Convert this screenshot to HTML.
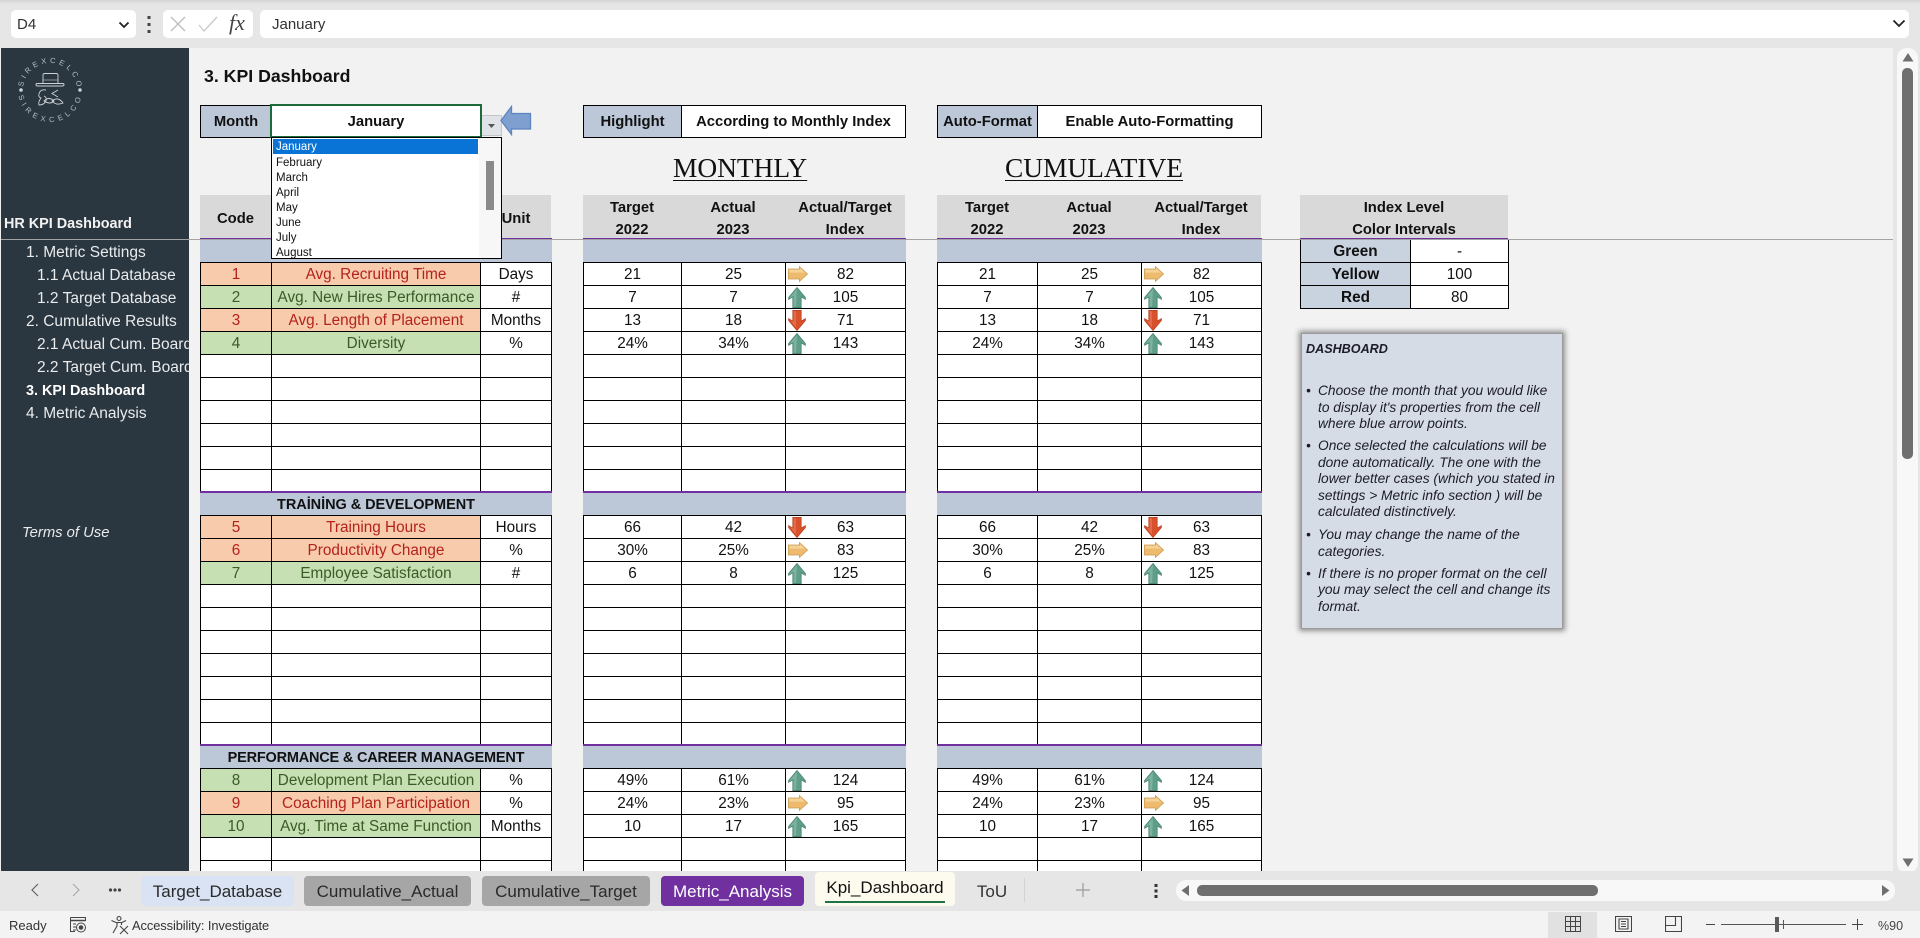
<!DOCTYPE html>
<html lang="en"><head><meta charset="utf-8"><title>KPI Dashboard</title>
<style>
html,body{margin:0;padding:0;width:1920px;height:938px;overflow:hidden;background:#e6e6e6;font-family:"Liberation Sans",sans-serif;color:#111}
*{box-sizing:border-box}
.a{position:absolute}
.n{position:absolute;white-space:nowrap}
#sheet{position:absolute;left:0;top:48px;width:1893px;height:823px;background:#f2f2f2;overflow:hidden}
#in{position:absolute;left:0;top:-48px;width:1893px;height:938px}
#side{position:absolute;left:0;top:48px;width:189px;height:823px;background:#2a3640;border-left:1px solid #eee;overflow:hidden;color:#e9ebec;font-size:15.5px;line-height:20px}
#side div{position:absolute;white-space:nowrap}
table{position:absolute;border-collapse:separate;border-spacing:0;table-layout:fixed;background:#fff;border-top:1px solid #000;border-left:1px solid #000;font-size:15.3px}
td{height:23px;padding:1px 0 0;border-right:1px solid #000;border-bottom:1px solid #000;text-align:center;white-space:nowrap;overflow:hidden;position:relative;line-height:20px}
td.r{background:#f8cbad;color:#b3221c}
td.g{background:#c6e0b4;color:#3a5a26}
td.l{background:#c9d3df;font-weight:bold}
svg.u,svg.d{position:absolute;left:2px;top:1px;width:18px;height:21px}
svg.o{position:absolute;left:2px;top:3px;width:20px;height:16px}
.hd{position:absolute;background:#d9d9d9;top:195px;height:43px}
.cat{position:absolute;background:#bcc7d8;height:23px;font-weight:bold;font-size:14.5px;text-align:center;line-height:25px;letter-spacing:-.05px}
.pl{position:absolute;background:#7030a0}
.b{position:absolute;font-weight:bold;font-size:14.8px;text-align:center;line-height:22px;white-space:nowrap}
.box{position:absolute;top:105px;height:33px;border:1px solid #000;background:#fff;font-weight:bold;font-size:14.8px;text-align:center;line-height:32px;white-space:nowrap;overflow:hidden}
.box.lb{background:#bcc7d8}
.tit{position:absolute;font-family:"Liberation Serif",serif;font-size:27.4px;text-decoration:underline;text-decoration-thickness:1px;text-underline-offset:3px;line-height:32px;white-space:nowrap;top:152px;color:#111}
#dd{position:absolute;left:271px;top:137px;width:231px;height:122px;background:#fff;border:1px solid #000;font-size:11.5px;color:#111}
#dd div{position:absolute;left:4px;height:15px;line-height:17px;white-space:nowrap}
#tb{position:absolute;left:1301px;top:333px;width:262px;height:296px;background:#d6dce6;border:1px solid #9a9a9a;box-shadow:0 0 5px 2px rgba(90,90,90,.65);font-style:italic;font-size:13.75px;color:#1c1c28}
#tb div{position:absolute;left:16px;white-space:nowrap;line-height:17px}
#tb div.x{left:4px}
.wb{position:absolute;background:#fff;border-radius:5px;top:10px;height:28px}
.tab{position:absolute;top:876px;height:30px;border-radius:4px;text-align:center;font-size:17px;line-height:32px;color:#2a2a2a;white-space:nowrap}
</style></head><body>
<svg width="0" height="0" style="position:absolute">
<symbol id="su" viewBox="0 0 16 19"><path fill="#5f9e88" stroke="#4b8571" stroke-width=".7" d="M8 .4 15.600 9.500V11.200L11.800 9V18.600H4.200V9L.4 11.200V9.500Z"/><path fill="#8fc2b0" opacity=".55" d="M8 1.500 1.400 9.500V10L5 8V18H7.200Z"/></symbol>
<symbol id="sd" viewBox="0 0 16 19"><path fill="#d9512c" stroke="#bc4020" stroke-width=".7" d="M8 18.600 15.600 9.500V7.800L11.800 10V.4H4.200V10L.4 7.800V9.500Z"/><path fill="#ee8a68" opacity=".5" d="M5 1V10.500L1.800 9 7 16V1Z"/></symbol>
<symbol id="so" viewBox="0 0 19 15"><path fill="#eebb6e" stroke="#c99a50" stroke-width=".7" d="M18.600 7.500 10.800 .4V2.800H.4V12.200H10.800V14.600Z"/><path fill="#f8dba6" opacity=".7" d="M1 3.300H11.400V1.800L16 6.200H1Z"/></symbol>
</svg>

<!-- top formula bar -->
<div class="a" style="left:0;top:0;width:1920px;height:4px;background:linear-gradient(#d4d4d4,#e6e6e6)"></div>
<div class="wb" style="left:11px;width:125px"></div>
<div class="n" style="left:17px;top:15px;font-size:15px;line-height:20px;color:#333">D4</div>
<svg class="a" style="left:118px;top:21px" width="12" height="8" viewBox="0 0 12 8"><path d="M1.500 1.500 6 6 10.500 1.500" fill="none" stroke="#222" stroke-width="1.800"/></svg>
<svg class="a" style="left:147px;top:16px" width="4" height="18" viewBox="0 0 4 18"><rect x=".5" y="0" width="3" height="3" fill="#444"/><rect x=".5" y="7" width="3" height="3" fill="#444"/><rect x=".5" y="14" width="3" height="3" fill="#444"/></svg>
<div class="wb" style="left:163px;width:90px"></div>
<svg class="a" style="left:170px;top:16px" width="52" height="17" viewBox="0 0 52 17"><path d="M1 1 15 15M15 1 1 15" stroke="#bdbdbd" stroke-width="1.300" fill="none"/><path d="M29 9 34 15 47 1" stroke="#c9c9c9" stroke-width="1.300" fill="none"/></svg>
<div class="n" style="left:229px;top:9px;font:italic 22px/28px 'Liberation Serif',serif;color:#444">fx</div>
<div class="wb" style="left:260px;width:1649px"></div>
<div class="n" style="left:272px;top:15px;font-size:15px;line-height:20px;color:#333">January</div>
<svg class="a" style="left:1892px;top:19px" width="14" height="9" viewBox="0 0 14 9"><path d="M1.500 1.500 7 7 12.500 1.500" fill="none" stroke="#222" stroke-width="1.800"/></svg>

<!-- sheet -->
<div id="sheet"><div id="in">
<div class="n" style="left:204px;top:65px;font-size:17.7px;font-weight:bold;line-height:22px">3. KPI Dashboard</div>

<div class="box lb" style="left:200px;width:72px">Month</div>
<div class="box lb" style="left:583px;width:99px">Highlight</div>
<div class="box" style="left:681px;width:225px">According to Monthly Index</div>
<div class="box lb" style="left:937px;width:101px">Auto-Format</div>
<div class="box" style="left:1037px;width:225px">Enable Auto-Formatting</div>
<div class="tit" style="left:673px">MONTHLY</div>
<div class="tit" style="left:1005px">CUMULATIVE</div>

<div class="hd" style="left:200px;width:351px"></div>
<div class="hd" style="left:583px;width:322px"></div>
<div class="hd" style="left:937px;width:324px"></div>
<div class="hd" style="left:1300px;width:208px"></div>
<div class="b" style="left:200px;top:208px;width:71px">Code</div>
<div class="b" style="left:481px;top:208px;width:70px">Unit</div>
<div class="b" style="left:583px;top:197px;width:98px">Target</div><div class="b" style="left:583px;top:219px;width:98px">2022</div>
<div class="b" style="left:681px;top:197px;width:104px">Actual</div><div class="b" style="left:681px;top:219px;width:104px">2023</div>
<div class="b" style="left:785px;top:197px;width:120px">Actual/Target</div><div class="b" style="left:785px;top:219px;width:120px">Index</div>
<div class="b" style="left:937px;top:197px;width:100px">Target</div><div class="b" style="left:937px;top:219px;width:100px">2022</div>
<div class="b" style="left:1037px;top:197px;width:104px">Actual</div><div class="b" style="left:1037px;top:219px;width:104px">2023</div>
<div class="b" style="left:1141px;top:197px;width:120px">Actual/Target</div><div class="b" style="left:1141px;top:219px;width:120px">Index</div>
<div class="b" style="left:1300px;top:197px;width:208px">Index Level</div><div class="b" style="left:1300px;top:219px;width:208px">Color Intervals</div>

<!-- category rows -->
<div class="cat" style="left:200px;top:239px;width:352px"></div>
<div class="cat" style="left:583px;top:239px;width:323px"></div>
<div class="cat" style="left:937px;top:239px;width:325px"></div>
<div class="cat" style="left:200px;top:493px;width:352px">TRAİNİNG &amp; DEVELOPMENT</div>
<div class="cat" style="left:583px;top:493px;width:323px"></div>
<div class="cat" style="left:937px;top:493px;width:325px"></div>
<div class="cat" style="left:200px;top:746px;width:352px;letter-spacing:-.2px">PERFORMANCE &amp; CAREER MANAGEMENT</div>
<div class="cat" style="left:583px;top:746px;width:323px"></div>
<div class="cat" style="left:937px;top:746px;width:325px"></div>

<!-- group 1 -->
<table style="left:200px;top:262px;width:352px"><colgroup><col style="width:71px"><col style="width:209px"><col style="width:71px"></colgroup>
<tr><td class="r">1</td><td class="r">Avg. Recruiting Time</td><td>Days</td></tr>
<tr><td class="g">2</td><td class="g">Avg. New Hires Performance</td><td>#</td></tr>
<tr><td class="r">3</td><td class="r">Avg. Length of Placement</td><td>Months</td></tr>
<tr><td class="g">4</td><td class="g">Diversity</td><td>%</td></tr>
<tr><td></td><td></td><td></td></tr><tr><td></td><td></td><td></td></tr><tr><td></td><td></td><td></td></tr><tr><td></td><td></td><td></td></tr><tr><td></td><td></td><td></td></tr><tr><td></td><td></td><td></td></tr></table>
<table style="left:583px;top:262px;width:323px"><colgroup><col style="width:98px"><col style="width:104px"><col style="width:120px"></colgroup>
<tr><td>21</td><td>25</td><td><svg class="o"><use href="#so"/></svg>82</td></tr>
<tr><td>7</td><td>7</td><td><svg class="u"><use href="#su"/></svg>105</td></tr>
<tr><td>13</td><td>18</td><td><svg class="d"><use href="#sd"/></svg>71</td></tr>
<tr><td>24%</td><td>34%</td><td><svg class="u"><use href="#su"/></svg>143</td></tr>
<tr><td></td><td></td><td></td></tr><tr><td></td><td></td><td></td></tr><tr><td></td><td></td><td></td></tr><tr><td></td><td></td><td></td></tr><tr><td></td><td></td><td></td></tr><tr><td></td><td></td><td></td></tr></table>
<table style="left:937px;top:262px;width:325px"><colgroup><col style="width:100px"><col style="width:104px"><col style="width:120px"></colgroup>
<tr><td>21</td><td>25</td><td><svg class="o"><use href="#so"/></svg>82</td></tr>
<tr><td>7</td><td>7</td><td><svg class="u"><use href="#su"/></svg>105</td></tr>
<tr><td>13</td><td>18</td><td><svg class="d"><use href="#sd"/></svg>71</td></tr>
<tr><td>24%</td><td>34%</td><td><svg class="u"><use href="#su"/></svg>143</td></tr>
<tr><td></td><td></td><td></td></tr><tr><td></td><td></td><td></td></tr><tr><td></td><td></td><td></td></tr><tr><td></td><td></td><td></td></tr><tr><td></td><td></td><td></td></tr><tr><td></td><td></td><td></td></tr></table>

<!-- group 2 -->
<table style="left:200px;top:515px;width:352px"><colgroup><col style="width:71px"><col style="width:209px"><col style="width:71px"></colgroup>
<tr><td class="r">5</td><td class="r">Training Hours</td><td>Hours</td></tr>
<tr><td class="r">6</td><td class="r">Productivity Change</td><td>%</td></tr>
<tr><td class="g">7</td><td class="g">Employee Satisfaction</td><td>#</td></tr>
<tr><td></td><td></td><td></td></tr><tr><td></td><td></td><td></td></tr><tr><td></td><td></td><td></td></tr><tr><td></td><td></td><td></td></tr><tr><td></td><td></td><td></td></tr><tr><td></td><td></td><td></td></tr><tr><td></td><td></td><td></td></tr></table>
<table style="left:583px;top:515px;width:323px"><colgroup><col style="width:98px"><col style="width:104px"><col style="width:120px"></colgroup>
<tr><td>66</td><td>42</td><td><svg class="d"><use href="#sd"/></svg>63</td></tr>
<tr><td>30%</td><td>25%</td><td><svg class="o"><use href="#so"/></svg>83</td></tr>
<tr><td>6</td><td>8</td><td><svg class="u"><use href="#su"/></svg>125</td></tr>
<tr><td></td><td></td><td></td></tr><tr><td></td><td></td><td></td></tr><tr><td></td><td></td><td></td></tr><tr><td></td><td></td><td></td></tr><tr><td></td><td></td><td></td></tr><tr><td></td><td></td><td></td></tr><tr><td></td><td></td><td></td></tr></table>
<table style="left:937px;top:515px;width:325px"><colgroup><col style="width:100px"><col style="width:104px"><col style="width:120px"></colgroup>
<tr><td>66</td><td>42</td><td><svg class="d"><use href="#sd"/></svg>63</td></tr>
<tr><td>30%</td><td>25%</td><td><svg class="o"><use href="#so"/></svg>83</td></tr>
<tr><td>6</td><td>8</td><td><svg class="u"><use href="#su"/></svg>125</td></tr>
<tr><td></td><td></td><td></td></tr><tr><td></td><td></td><td></td></tr><tr><td></td><td></td><td></td></tr><tr><td></td><td></td><td></td></tr><tr><td></td><td></td><td></td></tr><tr><td></td><td></td><td></td></tr><tr><td></td><td></td><td></td></tr></table>

<!-- group 3 -->
<table style="left:200px;top:768px;width:352px"><colgroup><col style="width:71px"><col style="width:209px"><col style="width:71px"></colgroup>
<tr><td class="g">8</td><td class="g">Development Plan Execution</td><td>%</td></tr>
<tr><td class="r">9</td><td class="r">Coaching Plan Participation</td><td>%</td></tr>
<tr><td class="g">10</td><td class="g">Avg. Time at Same Function</td><td>Months</td></tr>
<tr><td></td><td></td><td></td></tr><tr><td></td><td></td><td></td></tr></table>
<table style="left:583px;top:768px;width:323px"><colgroup><col style="width:98px"><col style="width:104px"><col style="width:120px"></colgroup>
<tr><td>49%</td><td>61%</td><td><svg class="u"><use href="#su"/></svg>124</td></tr>
<tr><td>24%</td><td>23%</td><td><svg class="o"><use href="#so"/></svg>95</td></tr>
<tr><td>10</td><td>17</td><td><svg class="u"><use href="#su"/></svg>165</td></tr>
<tr><td></td><td></td><td></td></tr><tr><td></td><td></td><td></td></tr></table>
<table style="left:937px;top:768px;width:325px"><colgroup><col style="width:100px"><col style="width:104px"><col style="width:120px"></colgroup>
<tr><td>49%</td><td>61%</td><td><svg class="u"><use href="#su"/></svg>124</td></tr>
<tr><td>24%</td><td>23%</td><td><svg class="o"><use href="#so"/></svg>95</td></tr>
<tr><td>10</td><td>17</td><td><svg class="u"><use href="#su"/></svg>165</td></tr>
<tr><td></td><td></td><td></td></tr><tr><td></td><td></td><td></td></tr></table>

<!-- purple lines -->
<div class="pl" style="left:200px;top:491px;width:352px;height:2px"></div>
<div class="pl" style="left:583px;top:491px;width:323px;height:2px"></div>
<div class="pl" style="left:937px;top:491px;width:325px;height:2px"></div>
<div class="pl" style="left:200px;top:744px;width:352px;height:2px"></div>
<div class="pl" style="left:583px;top:744px;width:323px;height:2px"></div>
<div class="pl" style="left:937px;top:744px;width:325px;height:2px"></div>

<!-- freeze line -->
<div class="a" style="left:0;top:239px;width:1893px;height:1px;background:#a3a3a3"></div>
<div class="pl" style="left:200px;top:238px;width:352px;height:1px"></div>
<div class="pl" style="left:583px;top:238px;width:323px;height:1px"></div>
<div class="pl" style="left:937px;top:238px;width:325px;height:1px"></div>
<div class="pl" style="left:1300px;top:238px;width:208px;height:1px"></div>

<!-- index intervals -->
<table style="left:1300px;top:240px;width:209px;border-top:0"><colgroup><col style="width:110px"><col style="width:98px"></colgroup>
<tr><td class="l">Green</td><td>-</td></tr>
<tr><td class="l">Yellow</td><td>100</td></tr>
<tr><td class="l">Red</td><td>80</td></tr></table>

<!-- text box -->
<div id="tb">
<div class="x" style="top:7px;font-weight:bold;font-size:12.6px">DASHBOARD</div>
<div class="x" style="top:48px">•</div><div style="top:48px">Choose the month that you would like</div>
<div style="top:65px">to display it's properties from the cell</div>
<div style="top:81px">where blue arrow points.</div>
<div class="x" style="top:103px">•</div><div style="top:103px">Once selected the calculations will be</div>
<div style="top:120px">done automatically. The one with the</div>
<div style="top:136px">lower better cases (which you stated in</div>
<div style="top:153px">settings &gt; Metric info section ) will be</div>
<div style="top:169px">calculated distinctively.</div>
<div class="x" style="top:192px">•</div><div style="top:192px">You may change the name of the</div>
<div style="top:209px">categories.</div>
<div class="x" style="top:231px">•</div><div style="top:231px">If there is no proper format on the cell</div>
<div style="top:247px">you may select the cell and change its</div>
<div style="top:264px">format.</div>
</div>

<!-- selected cell + dropdown -->
<div class="a" style="left:481px;top:115px;width:21px;height:21px;background:#dfe3e8;border:1px solid #c2c6cb"></div>
<svg class="a" style="left:487px;top:123px" width="9" height="6" viewBox="0 0 9 6"><path d="M1 1H8L4.500 5Z" fill="#555"/></svg>
<div class="box" style="left:270px;top:104px;width:212px;height:34px;border:2px solid #1d6b3b;line-height:33px">January</div>
<svg class="a" style="left:500px;top:105px" width="32" height="31" viewBox="0 0 32 31"><path d="M1 15.500 11.500 1.500V8.500H30.500V24H11.500V29.500Z" fill="#7f9fd1" stroke="#5c84bf" stroke-width="1.300"/></svg>
<div id="dd">
<div style="left:1px;top:1px;width:205px;background:#0a74d6;color:#fff;padding-left:3px">January</div>
<div style="top:17px">February</div>
<div style="top:32px">March</div>
<div style="top:47px">April</div>
<div style="top:62px">May</div>
<div style="top:77px">June</div>
<div style="top:92px">July</div>
<div style="top:107px;height:13px;overflow:hidden">August</div>
<div style="left:207px;top:0;width:22px;height:120px;background:#f7f7f7"></div>
<div style="left:214px;top:23px;width:8px;height:49px;background:#8a8a8a"></div>
</div>
</div></div>

<!-- sidebar -->
<div id="side">
<svg class="a" style="left:-1px;top:-48px;position:absolute" width="110" height="140" viewBox="0 0 110 140">
<defs><path id="ta" d="M23 90A27 27 0 0 1 77 90"/><path id="tb2" d="M18 90A32 32 0 0 0 82 90"/></defs>
<circle cx="21" cy="90" r="1.800" fill="#cfd3d6"/><circle cx="80" cy="90" r="1.800" fill="#cfd3d6"/>
<text font-family="Liberation Sans" font-size="7.500" fill="#b9bfc3" letter-spacing="3.300"><textPath href="#ta" startOffset="3">SIREXCELCO</textPath></text>
<text font-family="Liberation Sans" font-size="7.500" fill="#b9bfc3" letter-spacing="4.200"><textPath href="#tb2" startOffset="6">SIREXCELCO</textPath></text>
<g fill="none" stroke="#cfd3d6" stroke-width=".9">
<path d="M43 83V75Q43 73.500 45 73.500H56Q58 73.500 58 75V83"/><path d="M43 80H58" stroke-width=".6"/>
<rect x="36" y="83.500" width="28" height="2.500" rx="1.200"/>
<path d="M46 90Q40 89 39 94 38 97 41 98 38 102 39 105 44 105 46 101 47 97 44 96"/>
<path d="M58 90 52 93.500 58 97"/>
<path d="M44 101Q49 96 54 101 50 105 44 101ZM52 101Q58 96 63 103 56 106 52 101Z"/>
</g></svg>
<div style="left:3px;top:166px;font-weight:bold;font-size:14.400px;color:#f2f2f2">HR KPI Dashboard</div>
<div style="left:25px;top:195px">1. Metric Settings</div>
<div style="left:36px;top:218px">1.1 Actual Database</div>
<div style="left:36px;top:241px">1.2 Target Database</div>
<div style="left:25px;top:264px">2. Cumulative Results</div>
<div style="left:36px;top:287px">2.1 Actual Cum. Board</div>
<div style="left:36px;top:310px">2.2 Target Cum. Board</div>
<div style="left:25px;top:333px;font-weight:bold;font-size:14.400px;color:#fff">3. KPI Dashboard</div>
<div style="left:25px;top:356px">4. Metric Analysis</div>
<div style="left:21px;top:475px;font-style:italic;font-size:14.800px">Terms of Use</div>
<div style="left:-1px;top:191px;width:189px;height:1px;background:#a3a3a3"></div>
</div>

<!-- vertical scrollbar -->
<div class="a" style="left:1897px;top:48px;width:21px;height:825px;background:#f8f8f8;border-radius:10px"></div>
<svg class="a" style="left:1902px;top:53px" width="12" height="9" viewBox="0 0 12 9"><path d="M6 0 11.500 8.500H.5Z" fill="#6f6f6f"/></svg>
<div class="a" style="left:1902px;top:68px;width:11px;height:391px;background:#6f6f6f;border-radius:5px"></div>
<svg class="a" style="left:1902px;top:858px" width="12" height="9" viewBox="0 0 12 9"><path d="M6 9 11.500 .5H.5Z" fill="#6f6f6f"/></svg>

<!-- tab bar -->
<div class="a" style="left:0;top:871px;width:1920px;height:40px;background:#e6e6e6"></div>
<div class="a" style="left:0;top:911px;width:1920px;height:27px;background:#f3f3f3"></div>
<svg class="a" style="left:30px;top:883px" width="10" height="14" viewBox="0 0 10 14"><path d="M8 1 2 7 8 13" fill="none" stroke="#666" stroke-width="1.200"/></svg>
<svg class="a" style="left:71px;top:883px" width="10" height="14" viewBox="0 0 10 14"><path d="M2 1 8 7 2 13" fill="none" stroke="#aaa" stroke-width="1.200"/></svg>
<svg class="a" style="left:108px;top:887px" width="14" height="6" viewBox="0 0 14 6"><circle cx="2.500" cy="3" r="1.600" fill="#444"/><circle cx="7" cy="3" r="1.600" fill="#444"/><circle cx="11.500" cy="3" r="1.600" fill="#444"/></svg>
<div class="tab" style="left:141px;width:153px;background:#dae3f3">Target_Database</div>
<div class="tab" style="left:304px;width:167px;background:#a6a6a6">Cumulative_Actual</div>
<div class="tab" style="left:482px;width:168px;background:#a6a6a6">Cumulative_Target</div>
<div class="tab" style="left:661px;width:143px;background:#7030a0;color:#fff">Metric_Analysis</div>
<div class="tab" style="left:815px;top:872px;width:140px;height:34px;background:#fdfbee;line-height:32px;color:#111">Kpi_Dashboard</div>
<div class="a" style="left:825px;top:901px;width:120px;height:2px;background:#217346"></div>
<div class="tab" style="left:960px;width:64px;color:#333">ToU</div>
<div class="a" style="left:1024px;top:878px;width:1px;height:24px;background:#d2d2d2"></div>
<svg class="a" style="left:1076px;top:883px" width="14" height="14" viewBox="0 0 14 14"><path d="M7 0V14M0 7H14" stroke="#9a9a9a" stroke-width="1.200"/></svg>
<svg class="a" style="left:1154px;top:884px" width="4" height="14" viewBox="0 0 4 14"><rect x=".5" y="0" width="3" height="3" fill="#333"/><rect x=".5" y="5.500" width="3" height="3" fill="#333"/><rect x=".5" y="11" width="3" height="3" fill="#333"/></svg>
<div class="a" style="left:1176px;top:880px;width:719px;height:21px;background:#f8f8f8;border-radius:10px"></div>
<svg class="a" style="left:1181px;top:885px" width="9" height="11" viewBox="0 0 9 11"><path d="M0.500 5.500 8 0V11Z" fill="#6f6f6f"/></svg>
<div class="a" style="left:1197px;top:885px;width:401px;height:11px;background:#6f6f6f;border-radius:5px"></div>
<svg class="a" style="left:1881px;top:885px" width="9" height="11" viewBox="0 0 9 11"><path d="M8.500 5.500 1 0V11Z" fill="#6f6f6f"/></svg>

<!-- status bar -->
<div class="n" style="left:9px;top:917px;font-size:13px;line-height:18px;color:#333">Ready</div>
<svg class="a" style="left:69px;top:916px" width="20" height="18" viewBox="0 0 20 18"><g fill="none" stroke="#444" stroke-width="1"><path d="M1.500 1.500H16.500V5M1.500 1.500V15.500H6"/><path d="M1.500 4.500H16.500" stroke-width="1.500"/><circle cx="12" cy="11.500" r="4.500"/><circle cx="12" cy="11.500" r="1.800" fill="#444"/><path d="M4 8H7M4 11H7M4 14H7"/></g></svg>
<svg class="a" style="left:110px;top:915px" width="20" height="20" viewBox="0 0 20 20"><g fill="none" stroke="#444" stroke-width="1.100"><circle cx="9" cy="3.500" r="2"/><path d="M1.500 5.500 6 7.500H12L16 5.500M7 7.500V11L3 18M11.500 7.500V10"/><path d="M10 11 18 19M18 11 10 19"/></g></svg>
<div class="n" style="left:132px;top:917px;font-size:12.900px;line-height:18px;color:#333;letter-spacing:-.1px">Accessibility: Investigate</div>
<div class="a" style="left:1548px;top:912px;width:49px;height:26px;background:#e1e1e1"></div>
<svg class="a" style="left:1565px;top:916px" width="16" height="16" viewBox="0 0 16 16"><path d="M.5 .5H15.500V15.500H.5ZM5.500 .5V15.500M10.500 .5V15.500M.5 5.500H15.500M.5 10.500H15.500" fill="none" stroke="#444" stroke-width="1"/></svg>
<svg class="a" style="left:1615px;top:916px" width="17" height="16" viewBox="0 0 17 16"><path d="M.5 .5H16.500V15.500H.5ZM4 3H13V13H4Z" fill="none" stroke="#444" stroke-width="1.100"/><path d="M6 5.500H11M6 8H11M6 10.500H11" stroke="#444" stroke-width="1"/></svg>
<svg class="a" style="left:1665px;top:916px" width="17" height="16" viewBox="0 0 17 16"><path d="M.5 .5H16.500V15.500H.5ZM.5 9.500H10.500V.5" fill="none" stroke="#444" stroke-width="1.100"/></svg>
<div class="a" style="left:1706px;top:924px;width:9px;height:1px;background:#444"></div>
<div class="a" style="left:1721px;top:924px;width:125px;height:1px;background:#555"></div>
<div class="a" style="left:1783px;top:920px;width:1px;height:9px;background:#555"></div>
<div class="a" style="left:1775px;top:917px;width:4px;height:15px;background:#5a5a5a"></div>
<svg class="a" style="left:1852px;top:919px" width="11" height="11" viewBox="0 0 11 11"><path d="M5.500 0V11M0 5.500H11" stroke="#444" stroke-width="1"/></svg>
<div class="n" style="left:1878px;top:917px;font-size:12.500px;line-height:18px;color:#444">%90</div>
</body></html>
